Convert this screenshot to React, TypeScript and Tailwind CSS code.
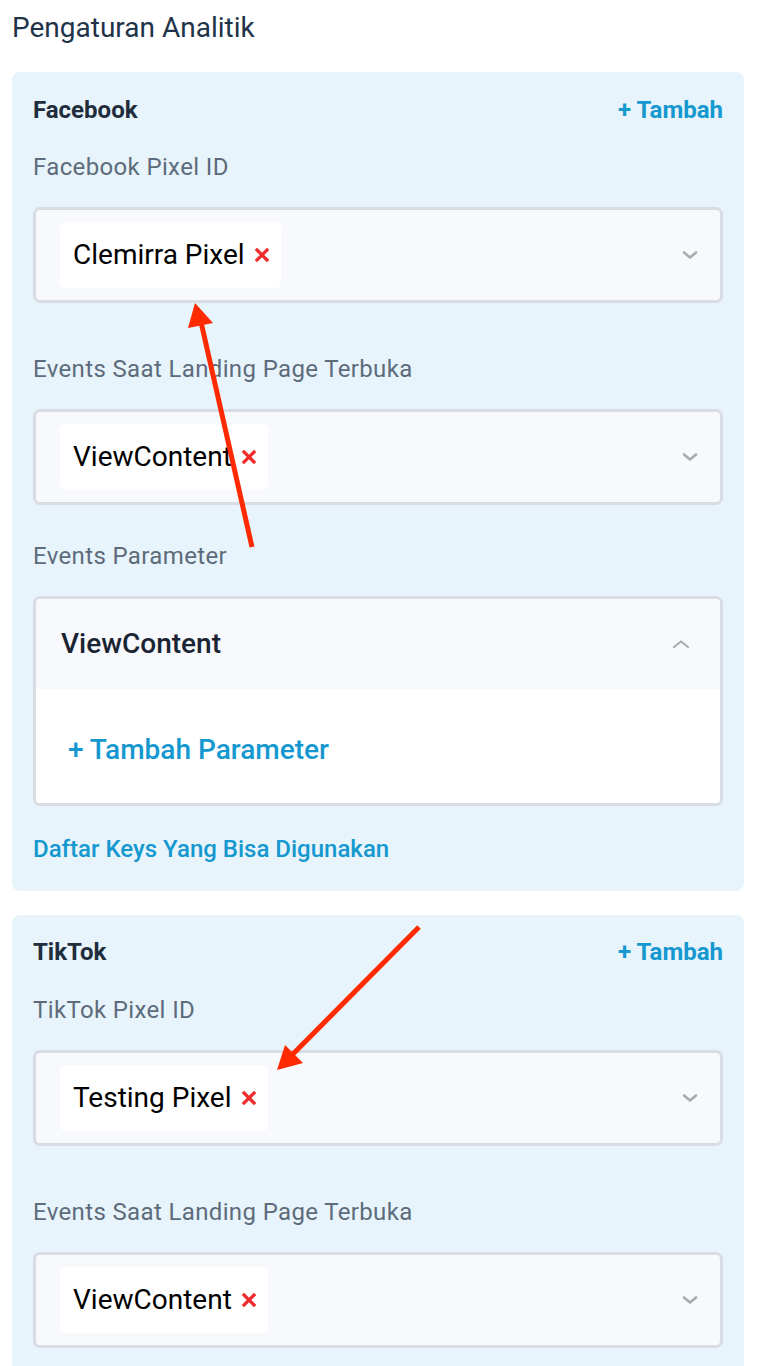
import React from 'react';

const font = { fontFamily: 'Roboto, "Noto Sans", Arial, sans-serif' };

function ChevronDown() {
  return (
    <svg width="16" height="10" viewBox="0 0 16 10" className="shrink-0">
      <path d="M2 2.5 L8 7.5 L14 2.5" fill="none" stroke="#a9abb0" strokeWidth="2.6" strokeLinecap="round" strokeLinejoin="round" />
    </svg>
  );
}

function ChevronUp() {
  return (
    <svg width="18" height="10" viewBox="0 0 18 10" className="shrink-0">
      <path d="M2 8 L9 2.5 L16 8" fill="none" stroke="#a9abb0" strokeWidth="2.2" strokeLinecap="round" strokeLinejoin="round" />
    </svg>
  );
}

function RemoveX() {
  return (
    <svg width="16" height="16" viewBox="0 0 16 16" className="shrink-0">
      <path d="M3 3 L13 13 M13 3 L3 13" stroke="#ef2b2b" strokeWidth="3.2" strokeLinecap="square" />
    </svg>
  );
}

function Label({ children }: { children: React.ReactNode }) {
  return <p className="text-[24px] leading-[28px] text-[#5d6b7b] tracking-[0.015em]">{children}</p>;
}

function MultiSelect({ value }: { value: string }) {
  return (
    <div className="h-[96px] border-[3px] border-[#d9dce3] rounded-[7px] bg-[#f7f9fc] flex items-center pl-[24px] pr-[22px]">
      <div className="h-[66px] bg-white rounded-[6px] flex items-center gap-[9px] pl-[13px] pr-[11px]">
        <span className="text-[28px] text-black">{value}</span>
        <RemoveX />
      </div>
      <div className="flex-1" />
      <ChevronDown />
    </div>
  );
}

function SectionHeader({ title }: { title: string }) {
  return (
    <div className="flex items-center justify-between">
      <h3 className="text-[24px] leading-[28px] font-bold text-[#1f2d3d]">{title}</h3>
      <button className="text-[24px] leading-[28px] font-bold text-[#1598cf]">+ Tambah</button>
    </div>
  );
}

export default function App() {
  return (
    <div style={font} className="relative w-[760px] min-h-[1366px] bg-white overflow-hidden">
      <div className="pl-[12px] pr-[16px] pt-[12px]">
        <h2 className="text-[28px] leading-[32px] text-[#1f3349]">Pengaturan Analitik</h2>

        <section className="mt-[28px] bg-[#e7f4fb] rounded-[8px] px-[21px] pt-[24px] pb-[28px]">
          <SectionHeader title="Facebook" />
          <div className="mt-[29px]">
            <Label>Facebook Pixel ID</Label>
          </div>
          <div className="mt-[26px]">
            <MultiSelect value="Clemirra Pixel" />
          </div>
          <div className="mt-[52px]">
            <Label>Events Saat Landing Page Terbuka</Label>
          </div>
          <div className="mt-[26px]">
            <MultiSelect value="ViewContent" />
          </div>
          <div className="mt-[37px]">
            <Label>Events Parameter</Label>
          </div>
          <div className="mt-[26px] border-[3px] border-[#d9dce3] rounded-[7px] overflow-hidden">
            <div className="h-[90px] bg-[#f7f9fc] flex items-center justify-between pl-[25px] pr-[30px]">
              <span className="text-[28px] font-medium text-[#1a2433]">ViewContent</span>
              <ChevronUp />
            </div>
            <div className="h-[114px] bg-white flex items-center pl-[32px] pt-[7px]">
              <button className="text-[28px] font-medium text-[#1598cf]">+ Tambah Parameter</button>
            </div>
          </div>
          <p className="mt-[29px] text-[24px] leading-[28px] font-medium text-[#1598cf]">Daftar Keys Yang Bisa Digunakan</p>
        </section>

        <section className="mt-[24px] bg-[#e7f4fb] rounded-[8px] px-[21px] pt-[23px] pb-[28px]">
          <SectionHeader title="TikTok" />
          <div className="mt-[30px]">
            <Label>TikTok Pixel ID</Label>
          </div>
          <div className="mt-[26px]">
            <MultiSelect value="Testing Pixel" />
          </div>
          <div className="mt-[52px]">
            <Label>Events Saat Landing Page Terbuka</Label>
          </div>
          <div className="mt-[26px]">
            <MultiSelect value="ViewContent" />
          </div>
        </section>
      </div>

      <svg className="absolute inset-0 pointer-events-none" width="760" height="1366" viewBox="0 0 760 1366">
        <line x1="252" y1="547" x2="201" y2="322" stroke="#ff2a00" strokeWidth="5" />
        <polygon points="195,303 188,328 213,323" fill="#ff2a00" />
        <line x1="419" y1="927" x2="292" y2="1055" stroke="#ff2a00" strokeWidth="5" />
        <polygon points="277,1070 285,1045 303,1063" fill="#ff2a00" />
      </svg>
    </div>
  );
}
